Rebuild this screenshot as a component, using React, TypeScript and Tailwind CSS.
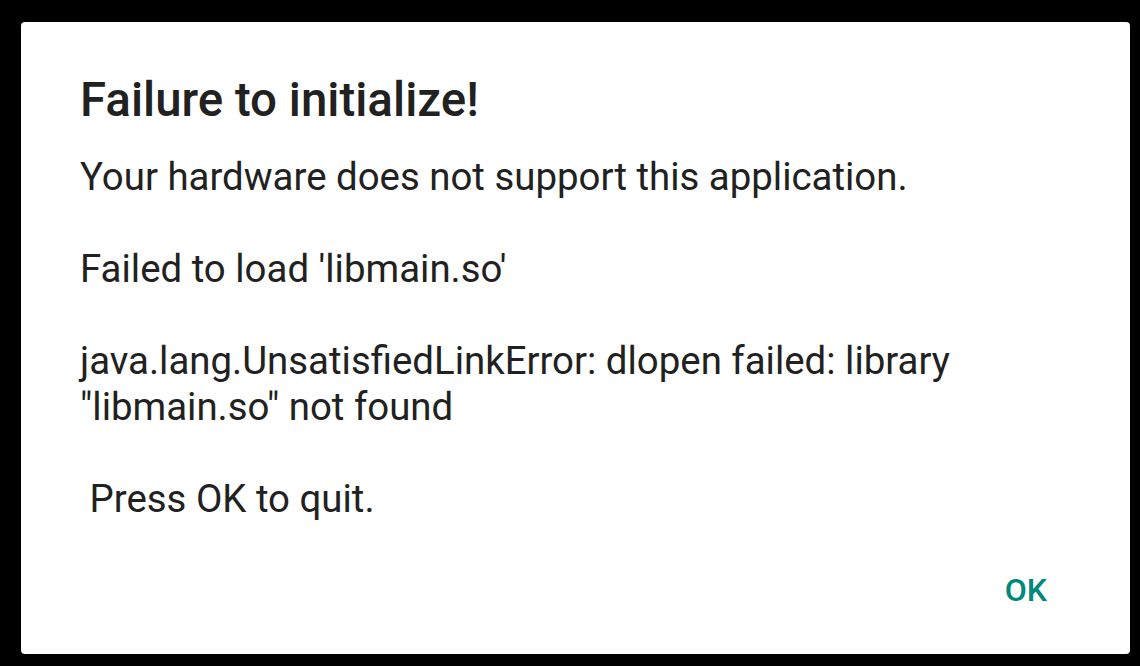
import React from 'react';

const message = [
  'Your hardware does not support this application.',
  '',
  "Failed to load 'libmain.so'",
  '',
  'java.lang.UnsatisfiedLinkError: dlopen failed: library',
  '"libmain.so" not found',
  '',
  ' Press OK to quit.',
].join('\n');

const App: React.FC = () => {
  return (
    <div
      className="h-[666px] w-[1140px] bg-black pl-[21px] pt-[22px]"
      style={{ fontFamily: 'Roboto, "Noto Sans", sans-serif' }}
    >
      <div className="flex h-[632px] w-[1109px] flex-col rounded-[4px] bg-white">
        <h1
          className="px-[59px] pt-[52px] text-[47.4px] font-medium leading-[53px] text-[#212121]"
          style={{ fontFamily: '"Roboto Medium", Roboto, sans-serif' }}
        >
          Failure to initialize!
        </h1>
        <p className="mt-[27px] whitespace-pre-wrap px-[59px] text-[38.4px] leading-[46px] text-[#212121]">
          {message}
        </p>
        <div className="mt-[49px] flex justify-end pr-[83px]">
          <button
            type="button"
            className="text-[32px] font-medium uppercase leading-[38px] text-[#00897b]"
            style={{ fontFamily: '"Roboto Medium", Roboto, sans-serif' }}
          >
            OK
          </button>
        </div>
      </div>
    </div>
  );
};

export default App;
